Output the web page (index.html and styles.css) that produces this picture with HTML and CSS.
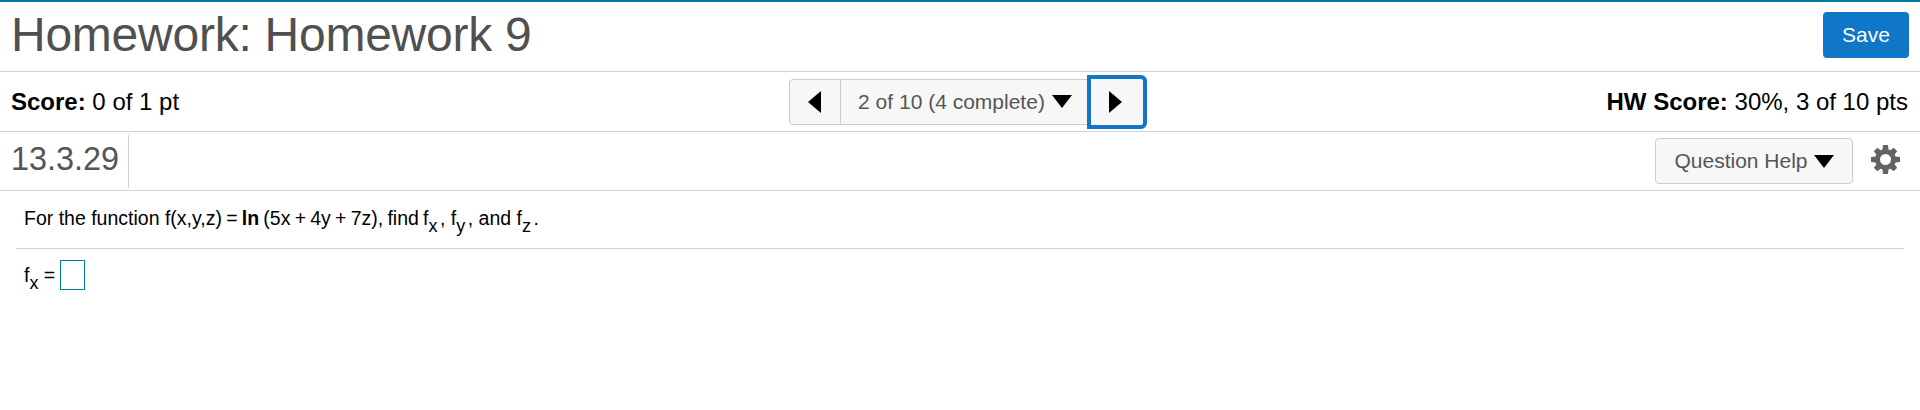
FILE: index.html
```html
<!DOCTYPE html>
<html>
<head>
	<meta charset="UTF-8">
	<title>Homework: Homework 9</title>
	<link rel="stylesheet" href="styles.css">
</head>
<body>
	<div class="title-bar">
		<h1 class="title">Homework: Homework 9</h1>
		<a href="javascript:;" class="save">Save</a>
	</div>
	<div class="score-bar">
		<div class="score"><b>Score:</b> 0 of 1 pt</div>
		<div class="pager">
			<a href="javascript:;" class="pager-btn pager-prev"><span class="tri tri-left"></span></a>
			<a href="javascript:;" class="pager-mid">2 of 10 (4 complete)<span class="tri tri-down"></span></a>
			<a href="javascript:;" class="pager-btn pager-next"><span class="tri tri-right"></span></a>
		</div>
		<div class="score score-right"><b>HW Score:</b> 30%, 3 of 10 pts</div>
	</div>
	<div class="question-bar">
		<div class="question-num">13.3.29</div>
		<a href="javascript:;" class="help">Question Help<span class="tri tri-down"></span></a>
		<svg class="gear" viewBox="0 0 29 29" width="29" height="29">
			<path fill="#636363" fill-rule="evenodd" d="M12 0L17 0L17.5 4.5L19.45 5.31L22.63 2.83L26.17 6.37L23.69 9.55L24.5 11.5L29 12L29 17L24.5 17.5L23.69 19.45L26.17 22.63L22.63 26.17L19.45 23.69L17.5 24.5L17 29L12 29L11.5 24.5L9.55 23.69L6.37 26.17L2.83 22.63L5.31 19.45L4.5 17.5L0 17L0 12L4.5 11.5L5.31 9.55L2.83 6.37L6.37 2.83L9.55 5.31L11.5 4.5ZM14.5 9a5.5 5.5 0 1 0 0 11 5.5 5.5 0 0 0 0-11z"/>
		</svg>
	</div>
	<div class="question">
		<p class="prompt">For the function f(x,y,z)<span class="math"> = <b>ln</b> (5x + 4y + 7z), find </span>f<sub>x</sub>, f<sub>y</sub>, and f<sub>z</sub>.</p>
		<div class="answer">
			<span>f<sub>x</sub> =</span>
			<span class="answer-box"></span>
		</div>
	</div>
</body>
</html>
```

FILE: styles.css
```css
*{margin: 0;padding: 0;box-sizing: border-box;text-decoration: none;}
body{font-family: "Liberation Sans", Arial, sans-serif;background: #fff;color: #000;border-top: 2px solid #007fa3;}
.title-bar{height: 70px;border-bottom: 1px solid #d0d0da;display: flex;justify-content: space-between;align-items: flex-start;padding: 5px 11px 0 11px;}
.title{font-size: 48px;line-height: 56px;font-weight: normal;color: #505050;letter-spacing: -.25px;}
.save{width: 86px;height: 46px;margin-top: 5px;background: #1077c8;border-radius: 4px;color: #fff;font-size: 21px;display: flex;align-items: center;justify-content: center;}
.score-bar{height: 60px;border-bottom: 1px solid #d0d0da;display: grid;grid-template-columns: 1fr auto 1fr;align-items: center;padding: 0 12px 0 11px;}
.score{font-size: 24px;}
.score-right{text-align: right;}
.pager{display: flex;height: 46px;margin-left: 16px;background: #f7f7f7;border: 1px solid #ccc;border-radius: 4px;}
.pager-btn{width: 51px;display: flex;align-items: center;justify-content: center;}
.pager-prev{border-right: 1px solid #ccc;}
.pager-mid{width: 246px;padding-left: 3px;color: #555;font-size: 21px;display: flex;align-items: center;justify-content: center;}
.pager-mid .tri-down{margin-left: 7px;}
.pager-next{width: 60px;height: 54px;margin: -5px -1px -5px 0;padding-right: 3px;border: 4px solid #1077c8;border-radius: 0 6px 6px 0;background: #f7f7f7;}
.tri{display: inline-block;width: 0;height: 0;}
.tri-left{border-top: 11px solid transparent;border-bottom: 11px solid transparent;border-right: 13px solid #000;}
.tri-right{border-top: 11px solid transparent;border-bottom: 11px solid transparent;border-left: 13px solid #000;}
.tri-down{margin-left: 6px;border-left: 10px solid transparent;border-right: 10px solid transparent;border-top: 13px solid #000;}
.question-bar{height: 59px;border-bottom: 1px solid #d0d0da;display: flex;align-items: center;padding: 0 20px 0 11px;}
.question-num{font-size: 32.4px;color: #555;height: 53px;line-height: 49px;padding-right: 9px;border-right: 1px solid #d0d0da;margin-right: auto;}
.help{height: 46px;width: 198px;background: #f7f7f7;border: 1px solid #ccc;border-radius: 4px;color: #555;font-size: 21px;display: flex;align-items: center;justify-content: center;}
.gear{margin-left: 18px;margin-bottom: 4px;}
.question{padding: 0 16px;}
.prompt{font-size: 19.5px;padding: 16px 8px 0;height: 58px;border-bottom: 1px solid #d0d0da;}
.prompt b{font-weight: bold;}
.prompt sub{margin-right: 2.5px;}
.math{word-spacing: -1.2px;}
sub{font-size: 18px;line-height: 0;vertical-align: -7px;}
.answer{font-size: 19.5px;padding: 11px 8px 0;display: flex;align-items: center;gap: 5px;}
.answer-box{width: 25px;height: 30px;border: 1px solid #007fa3;display: block;}
```
